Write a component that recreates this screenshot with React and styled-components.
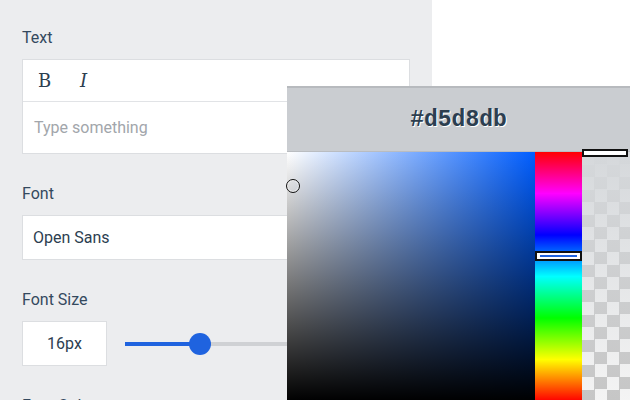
import styled, { createGlobalStyle } from "styled-components"

const GlobalStyle = createGlobalStyle`
    html, body {
        margin: 0;
        padding: 0;
        background: #ffffff;
        overflow: hidden;
    }
    body {
        font-family: Roboto, "Liberation Sans", sans-serif;
    }
`

const Page = styled.div`
    position: relative;
    width: 630px;
    height: 400px;
    overflow: hidden;
    display: flex;
`

const Panel = styled.aside`
    width: 432px;
    height: 100%;
    box-sizing: border-box;
    background: #ecedef;
    padding: 28px 22px 0 22px;
    display: flex;
    flex-direction: column;
    gap: 30px;
`

const Field = styled.div`
    display: flex;
    flex-direction: column;
`

const Label = styled.label`
    font-size: 16px;
    line-height: 20px;
    color: #34495e;
    margin-bottom: 11px;
`

const Editor = styled.div`
    width: 388px;
    height: 95px;
    box-sizing: border-box;
    background: #fff;
    border: 1px solid #dcdee1;
    display: flex;
    flex-direction: column;
`

const Toolbar = styled.div`
    height: 42px;
    box-sizing: border-box;
    border-bottom: 1px solid #e1e3e6;
    display: flex;
    align-items: center;
    padding-left: 15px;
    gap: 30px;
`

const ToolButton = styled.span`
    font-family: "DejaVu Serif", "Liberation Serif", serif;
    font-size: 18px;
    color: #2c3e50;
    font-style: ${(p) => (p.$italic ? "italic" : "normal")};
    width: 12px;
`

const Placeholder = styled.div`
    flex: 1;
    display: flex;
    align-items: center;
    padding-left: 11px;
    font-size: 16px;
    color: #a2a6ab;
`

const Input = styled.div`
    width: ${(p) => p.$width || "388px"};
    height: 45px;
    box-sizing: border-box;
    background: #fff;
    border: 1px solid #dcdee1;
    display: flex;
    align-items: center;
    justify-content: ${(p) => (p.$center ? "center" : "flex-start")};
    padding-left: ${(p) => (p.$center ? "0" : "10px")};
    font-size: 16px;
    color: #2c3e50;
`

const SizeRow = styled.div`
    display: flex;
    align-items: center;
    gap: 18px;
`

const Slider = styled.div`
    position: relative;
    flex: 1;
    height: 4px;
    background: #cfd1d4;
    margin-right: -22px;
`

const SliderFill = styled.div`
    height: 100%;
    background: #1f63df;
`

const Thumb = styled.div`
    position: absolute;
    top: 50%;
    width: 22px;
    height: 22px;
    border-radius: 50%;
    background: #1f63df;
    transform: translate(-50%, -50%);
`

const Picker = styled.div`
    position: absolute;
    left: 287px;
    top: 86px;
    width: 345px;
    display: flex;
    flex-direction: column;
`

const PickerHeader = styled.div`
    height: 66px;
    box-sizing: border-box;
    background: #cacdd1;
    border-top: 2px solid #b7babe;
    border-bottom: 1px solid #b9bcc0;
    display: flex;
    align-items: center;
    justify-content: center;
    padding-right: 2px;
    font-family: "Liberation Mono", "DejaVu Sans Mono", monospace;
    font-weight: 700;
    font-size: 23px;
    color: #2c3e50;
    text-shadow: 1px 1px 0 #ffffff;
`

const PickerBody = styled.div`
    display: flex;
    height: 249px;
`

const SatVal = styled.div`
    position: relative;
    width: 248px;
    height: 100%;
    background: linear-gradient(to top, #000, rgba(0, 0, 0, 0)),
        linear-gradient(to right, #fff, hsl(218, 100%, 50%));
`

const SatMarker = styled.div`
    position: absolute;
    left: 6px;
    top: 34px;
    width: 12px;
    height: 12px;
    border-radius: 50%;
    border: 1.5px solid #111;
    box-shadow: inset 0 0 0 1px rgba(255, 255, 255, 0.6);
    transform: translate(-50%, -50%);
`

const Hue = styled.div`
    position: relative;
    width: 47px;
    height: 100%;
    background: linear-gradient(
        to bottom,
        #ff0000 0%,
        #ff00ff 16.67%,
        #0000ff 33.33%,
        #00ffff 50%,
        #00ff00 66.67%,
        #ffff00 83.33%,
        #ff0000 100%
    );
`

const HueHandle = styled.div`
    position: absolute;
    left: 0;
    right: 0;
    top: 99px;
    height: 10px;
    box-sizing: border-box;
    border: 2px solid #111;
    background: #fff;
    padding: 2px 3px;

    &::after {
        content: "";
        display: block;
        height: 100%;
        background: #1f63df;
    }
`

const Alpha = styled.div`
    position: relative;
    width: 50px;
    height: 100%;
    background: linear-gradient(to bottom, rgba(213, 216, 219, 1), rgba(213, 216, 219, 0)),
        repeating-conic-gradient(#c6c6c6 0% 25%, #f4f4f4 0% 50%) 0 0 / 25px 25px;
`

const AlphaHandle = styled.div`
    position: absolute;
    left: 0;
    width: 46px;
    top: -3px;
    height: 8px;
    box-sizing: border-box;
    border: 2px solid #111;
    background: #fff;
`

export default function App() {
    return (
        <Page>
            <GlobalStyle />
            <Panel>
                <Field>
                    <Label>Text</Label>
                    <Editor>
                        <Toolbar>
                            <ToolButton>B</ToolButton>
                            <ToolButton $italic>I</ToolButton>
                        </Toolbar>
                        <Placeholder>Type something</Placeholder>
                    </Editor>
                </Field>
                <Field>
                    <Label>Font</Label>
                    <Input>Open Sans</Input>
                </Field>
                <Field>
                    <Label>Font Size</Label>
                    <SizeRow>
                        <Input $width="85px" $center>16px</Input>
                        <Slider>
                            <SliderFill style={{ width: "75px" }} />
                            <Thumb style={{ left: "75px" }} />
                        </Slider>
                    </SizeRow>
                </Field>
                <Field>
                    <Label>Font Color</Label>
                </Field>
            </Panel>
            <Picker>
                <PickerHeader>#d5d8db</PickerHeader>
                <PickerBody>
                    <SatVal>
                        <SatMarker />
                    </SatVal>
                    <Hue>
                        <HueHandle />
                    </Hue>
                    <Alpha>
                        <AlphaHandle />
                    </Alpha>
                </PickerBody>
            </Picker>
        </Page>
    )
}
